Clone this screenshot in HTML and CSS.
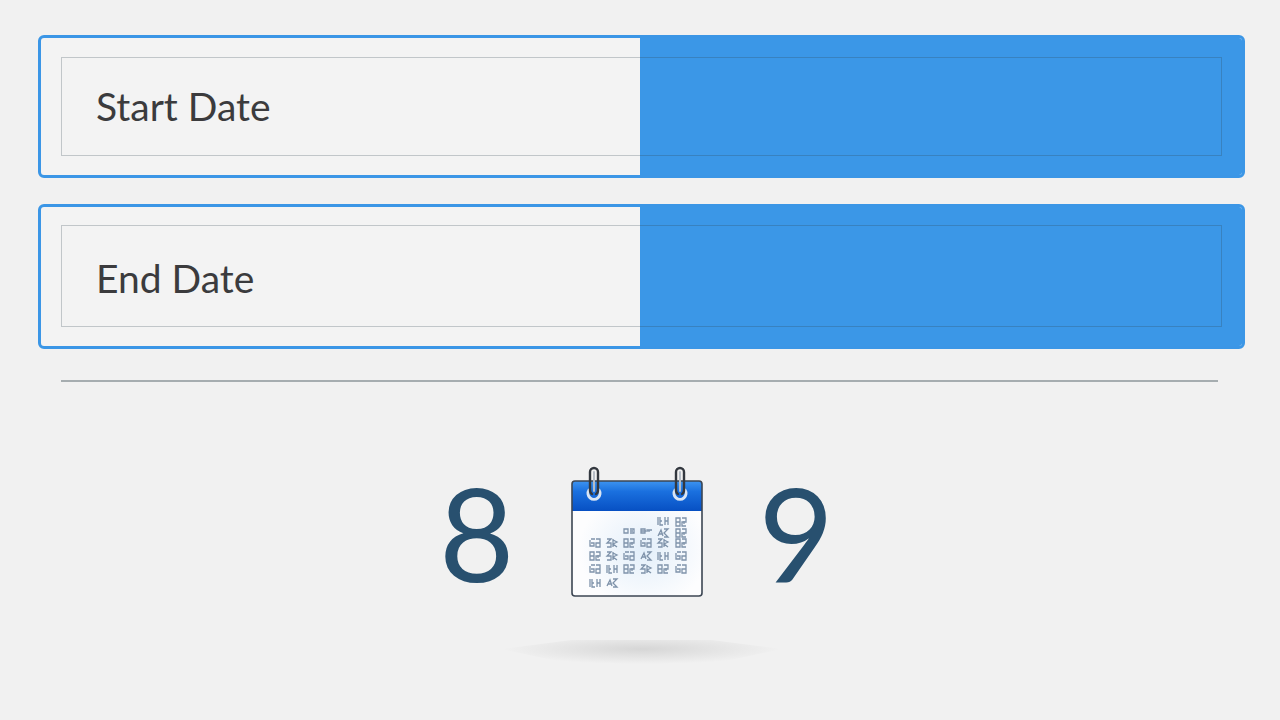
FILE: index.html
```html
<!DOCTYPE html>
<html lang="en">
<head>
<meta charset="utf-8">
<meta name="viewport" content="width=device-width, initial-scale=1">
<title>Date range</title>
<link rel="stylesheet" href="styles.css">
</head>
<body>
<main class="page">
  <form class="fields">
    <div class="field">
      <div class="field-frame">
        <label class="field-label" for="start">Start Date</label>
        <input class="field-input" id="start" type="text">
      </div>
    </div>
    <div class="field field-end">
      <div class="field-frame">
        <label class="field-label" for="end">End Date</label>
        <input class="field-input" id="end" type="text">
      </div>
    </div>
  </form>
  <hr class="divider">
  <section class="summary">
    <span class="digit">8</span>
    <svg class="calendar" viewBox="8 5 136 136" aria-hidden="true">
      <defs>
        <linearGradient id="head" x1="0" y1="0" x2="0" y2="1">
          <stop offset="0" stop-color="#3d94f0"/><stop offset=".35" stop-color="#1a70df"/><stop offset="1" stop-color="#0750c3"/>
        </linearGradient>
        <radialGradient id="sheet" cx=".55" cy=".6" r=".5">
          <stop offset="0" stop-color="#e3effa"/><stop offset="1" stop-color="#fdfdfe"/>
        </radialGradient>
        <g id="a"><path d="M-5-4h4v8h-4zM-5 0h4M1-4h4v4h-4v4h4M3-1v3"/></g>
        <g id="b"><path d="M-5-4h4l-4 4h4v4h-4M1-3l4 2-4 2 4 3M1-4v8"/></g>
        <g id="c"><path d="M-5-3v6h4v-3h-3M-4-4h4M1-4h4v8h-4v-4h4"/></g>
        <g id="d"><path d="M-5-4v8M-3-4v8h3M2-4v8M5-4v8M2 0h3M-3 0h2"/></g>
        <g id="e"><path d="M-5 3l3-6 2 6M-4 1h3M1-4h4l-4 4 4 4h-4"/></g>
        <g id="f"><path d="M-5-2h4v4h-4zM1-2h4v4h-4M1 0h3"/></g>
        <g id="g"><path d="M-5-2h4v4h-4zM-5 0h5M1 1v-2h2v2M3-1h3"/></g>
      </defs>
      <rect x="11" y="22" width="130" height="115" rx="3" fill="url(#sheet)"/>
      <path d="M11 52V25q0-3 3-3h124q3 0 3 3v27z" fill="url(#head)"/>
      <rect x="11" y="22" width="130" height="115" rx="3" fill="none" stroke="#3c4653" stroke-width="1.6"/>
      <g fill="none" stroke="#7f93aa" stroke-width="1.3">
        <use href="#d" x="102" y="62"/><use href="#a" x="120" y="63"/>
        <use href="#f" x="68" y="72"/><use href="#g" x="85" y="72"/><use href="#e" x="102" y="74"/><use href="#a" x="120" y="74"/>
        <use href="#c" x="34" y="84"/><use href="#b" x="51" y="84"/><use href="#a" x="68" y="84"/><use href="#c" x="85" y="84"/><use href="#b" x="102" y="84"/><use href="#a" x="120" y="84"/>
        <use href="#a" x="34" y="97"/><use href="#b" x="51" y="97"/><use href="#c" x="68" y="97"/><use href="#e" x="85" y="97"/><use href="#d" x="102" y="97"/><use href="#c" x="120" y="97"/>
        <use href="#c" x="34" y="110"/><use href="#d" x="51" y="110"/><use href="#a" x="68" y="110"/><use href="#b" x="85" y="110"/><use href="#a" x="102" y="110"/><use href="#c" x="120" y="110"/>
        <use href="#d" x="34" y="124"/><use href="#e" x="51" y="124"/>
      </g>
      <g fill="none" stroke-linecap="round">
        <path d="M28 31a6 6 0 1 0 10 0M114 31a6 6 0 1 0 10 0" stroke="#d9e5f4" stroke-width="3"/>
        <path d="M31 35q-2-1-2-4V13a4 4 0 0 1 8 0v18q0 3-2 4M117 35q-2-1-2-4V13a4 4 0 0 1 8 0v18q0 3-2 4" stroke="#33383f" stroke-width="2.4"/>
        <path d="M33 13v19M119 13v19" stroke="#b6bdc6" stroke-width="2"/>
      </g>
    </svg>
    <span class="digit">9</span>
  </section>
  <div class="shadow"></div>
</main>
</body>
</html>
```
FILE: styles.css
```css
* {
  box-sizing: border-box;
}

body {
  margin: 0;
  background: #f1f1f1;
  color: #3b3b3d;
  font-family: Lato, "Open Sans", sans-serif;
}

.page {
  padding: 35px 35px 0 38px;
}

.fields {
  display: grid;
  gap: 26px;
}

.field {
  padding: 19px 20px;
  border: 3px solid #3b96e6;
  border-radius: 6px;
  background: linear-gradient(to right, #f3f3f3 calc(50% - 1px), #3b97e7 calc(50% - 1px)) padding-box;
}

.field-frame {
  display: grid;
  grid-template-columns: 1fr 1fr;
  padding: 24px 0 25px 34px;
  border: 1px solid rgba(50, 70, 80, 0.26);
}

.field-end {
  padding: 18px 20px 19px;
}

.field-end .field-frame {
  padding: 28px 0 24px 34px;
}

.field-label {
  font-size: 39px;
  line-height: 48px;
}

.field-input {
  min-width: 0;
  padding: 0 24px;
  border: 0;
  outline: 0;
  background: transparent;
  color: #fff;
  font: inherit;
  font-size: 32px;
}

.divider {
  height: 2px;
  margin: 31px 27px 0 23px;
  border: 0;
  background: #a6adb0;
}

.summary {
  display: flex;
  justify-content: center;
  align-items: center;
  gap: 54px;
  margin-top: 70px;
  padding-right: 10px;
}

.digit {
  color: #28506f;
  font-size: 130px;
  line-height: 160px;
}

.calendar {
  width: 136px;
  height: 136px;
}

.shadow {
  width: 280px;
  height: 30px;
  margin: 22px auto 0;
  background: radial-gradient(closest-side, #d6d6d6, #e1e1e1 40%, #f1f1f1);
  clip-path: polygon(0 50%, 25% 20%, 75% 20%, 100% 50%, 75% 100%, 25% 100%);
}
```
